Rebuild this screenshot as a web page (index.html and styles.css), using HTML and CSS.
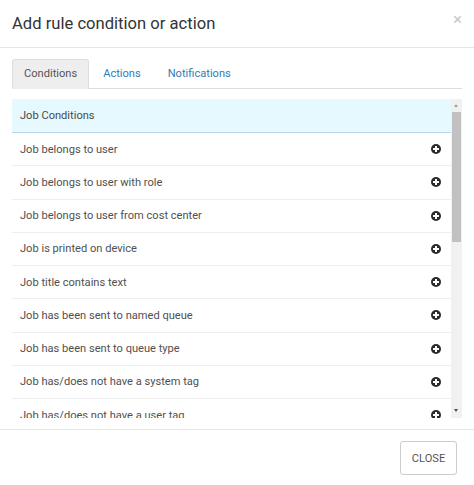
FILE: index.html
```html
<!DOCTYPE html>
<html>
<head>
<meta charset="utf-8">
<link rel="stylesheet" href="styles.css">
</head>
<body>
<div class="modal">
  <div class="header">
    <h4 class="title">Add rule condition or action</h4>
    <span class="close-x">×</span>
  </div>
  <div class="body">
    <ul class="tabs">
      <li class="tab active">Conditions</li>
      <li class="tab">Actions</li>
      <li class="tab">Notifications</li>
    </ul>
    <div class="listwrap">
      <div class="list">
        <div class="list-head">Job Conditions</div>
        <div class="row"><span>Job belongs to user</span><i class="plus"></i></div>
        <div class="row"><span>Job belongs to user with role</span><i class="plus"></i></div>
        <div class="row"><span>Job belongs to user from cost center</span><i class="plus"></i></div>
        <div class="row"><span>Job is printed on device</span><i class="plus"></i></div>
        <div class="row"><span>Job title contains text</span><i class="plus"></i></div>
        <div class="row"><span>Job has been sent to named queue</span><i class="plus"></i></div>
        <div class="row"><span>Job has been sent to queue type</span><i class="plus"></i></div>
        <div class="row"><span>Job has/does not have a system tag</span><i class="plus"></i></div>
        <div class="row"><span>Job has/does not have a user tag</span><i class="plus"></i></div>
      </div>
      <div class="scrollbar">
        <div class="arrow up"></div>
        <div class="track"><div class="thumb"></div></div>
        <div class="arrow down"></div>
      </div>
    </div>
  </div>
  <div class="footer">
    <button class="btn">CLOSE</button>
  </div>
</div>
</body>
</html>
```
FILE: styles.css
```css
html, body { margin: 0; padding: 0; background: #fff; }
body { font-family: Roboto, "Liberation Sans", sans-serif; color: #333; width: 474px; height: 485px; overflow: hidden; }
.modal { display: flex; flex-direction: column; }
.header { display: flex; justify-content: space-between; align-items: center; height: 47px; padding: 0 12px; border-bottom: 1px solid #e5e5e5; }
.title { margin: 0; font-size: 16.6px; font-weight: 400; color: #333; }
.close-x { font-size: 17px; color: #c8c8c8; line-height: 1; margin-top: -8px; margin-right: 0; }
.body { padding: 11px 12px 0 12px; }
.tabs { list-style: none; margin: 0; padding: 0; display: flex; border-bottom: 1px solid #ddd; height: 29px; }
.tab { font-size: 11.1px; color: #337ab7; padding: 0 12px 0 13px; line-height: 28px; margin-bottom: -1px; border: 1px solid transparent; border-radius: 3px 3px 0 0; }
.tab.active { background: #eee; color: #555; border-color: #ddd; border-bottom-color: #eee; padding: 0 11px; }
.listwrap { margin-top: 10px; height: 319px; display: flex; overflow: hidden; }
.list { flex: 1; overflow: hidden; }
.list-head { background: #e6f9fe; height: 34px; box-sizing: border-box; line-height: 33px; padding-left: 8px; font-size: 11.1px; color: #4a4a4a; border-bottom: 1px solid #b6d8e6; }
.row { display: flex; justify-content: space-between; align-items: center; height: 33.25px; box-sizing: border-box; padding: 0 10px 0 8px; font-size: 11.1px; color: #505050; border-bottom: 1px solid #eee; }
.plus { width: 10px; height: 10px; border-radius: 50%; background: #2b2b2b; position: relative; display: block; }
.plus::before, .plus::after { content: ""; position: absolute; background: #fff; }
.plus::before { left: 2px; right: 2px; top: 4px; height: 2px; }
.plus::after { top: 2px; bottom: 2px; left: 4px; width: 2px; }
.scrollbar { width: 11px; background: #f1f1f1; display: flex; flex-direction: column; }
.arrow { height: 13px; position: relative; }
.arrow.up::after { content: ""; position: absolute; left: 3px; top: 5px; border-left: 2.5px solid transparent; border-right: 2.5px solid transparent; border-bottom: 3px solid #a3a3a3; }
.arrow.down::after { content: ""; position: absolute; left: 3px; top: 4px; border-left: 2.5px solid transparent; border-right: 2.5px solid transparent; border-top: 3px solid #505050; }
.track { flex: 1; padding: 0 1px; }
.thumb { height: 130px; background: #c1c1c1; }
.footer { margin-top: 11px; border-top: 1px solid #e5e5e5; display: flex; justify-content: flex-end; padding: 11px 17px 0 0; }
.btn { width: 57px; height: 34px; background: #fff; border: 1px solid #ccc; border-radius: 3px; font-family: Roboto, "Liberation Sans", sans-serif; font-size: 11.1px; color: #555; padding: 0; }
```
